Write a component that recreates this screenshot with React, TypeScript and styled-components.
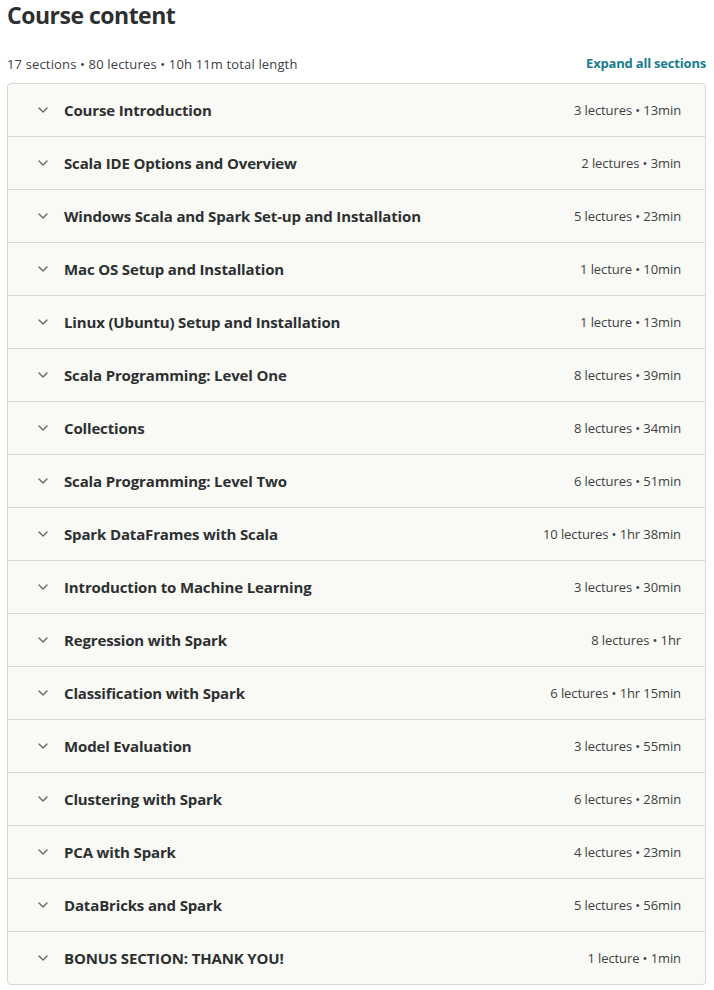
import React from "react";
import styled, { createGlobalStyle } from "styled-components";

const Global = createGlobalStyle`
  html, body { margin: 0; padding: 0; background: #ffffff; }
  body { font-family: "Open Sans", "Noto Sans", Arial, sans-serif; color: #2d2f31; }
`;

const Page = styled.div`
  padding: 0 8px 0 7px;
`;

const Title = styled.h2`
  margin: 0;
  font-size: 23px;
  line-height: 30px;
  font-weight: 700;
  color: #2d2f31;
  letter-spacing: -0.5px;
`;

const SummaryBar = styled.div`
  display: flex;
  align-items: center;
  justify-content: space-between;
  margin-top: 20px;
  height: 28px;
  margin-bottom: 5px;
`;

const Summary = styled.span`
  font-size: 13px;
  color: #3e4143;
  letter-spacing: 0.15px;
`;

const ExpandLink = styled.button`
  border: none;
  background: none;
  padding: 0;
  font-family: inherit;
  font-size: 13px;
  font-weight: 700;
  color: #1a7d8d;
  cursor: pointer;
  letter-spacing: -0.2px;
  margin-top: -3px;
`;

const Accordion = styled.div`
  border: 1px solid #d9d9cd;
  border-radius: 4px;
  overflow: hidden;
  background: #f9faf6;
`;

const Row = styled.div`
  display: flex;
  align-items: center;
  height: 52px;
  padding: 0 24px 0 29px;
  & + & { border-top: 1px solid #d9d9cd; }
`;

const Chevron = styled.span`
  display: flex;
  width: 12px;
  justify-content: center;
  color: #6a6f73;
  margin-right: 15px;
`;

const SectionTitle = styled.span`
  flex: 1;
  font-size: 15px;
  font-weight: 700;
  color: #2d2f31;
  letter-spacing: -0.15px;
`;

const Meta = styled.span`
  font-size: 13px;
  color: #3e4143;
  letter-spacing: -0.1px;
`;

const sections: [string, string][] = [
  ["Course Introduction", "3 lectures • 13min"],
  ["Scala IDE Options and Overview", "2 lectures • 3min"],
  ["Windows Scala and Spark Set-up and Installation", "5 lectures • 23min"],
  ["Mac OS Setup and Installation", "1 lecture • 10min"],
  ["Linux (Ubuntu) Setup and Installation", "1 lecture • 13min"],
  ["Scala Programming: Level One", "8 lectures • 39min"],
  ["Collections", "8 lectures • 34min"],
  ["Scala Programming: Level Two", "6 lectures • 51min"],
  ["Spark DataFrames with Scala", "10 lectures • 1hr 38min"],
  ["Introduction to Machine Learning", "3 lectures • 30min"],
  ["Regression with Spark", "8 lectures • 1hr"],
  ["Classification with Spark", "6 lectures • 1hr 15min"],
  ["Model Evaluation", "3 lectures • 55min"],
  ["Clustering with Spark", "6 lectures • 28min"],
  ["PCA with Spark", "4 lectures • 23min"],
  ["DataBricks and Spark", "5 lectures • 56min"],
  ["BONUS SECTION: THANK YOU!", "1 lecture • 1min"],
];

const ChevronIcon = () => (
  <svg width="10" height="6" viewBox="0 0 10 6" fill="none">
    <path d="M1 1l4 4 4-4" stroke="currentColor" strokeWidth="1.5" strokeLinecap="round" strokeLinejoin="round" />
  </svg>
);

export default function App() {
  return (
    <Page>
      <Global />
      <Title>Course content</Title>
      <SummaryBar>
        <Summary>17 sections • 80 lectures • 10h 11m total length</Summary>
        <ExpandLink>Expand all sections</ExpandLink>
      </SummaryBar>
      <Accordion>
        {sections.map(([t, m]) => (
          <Row key={t}>
            <Chevron><ChevronIcon /></Chevron>
            <SectionTitle>{t}</SectionTitle>
            <Meta>{m}</Meta>
          </Row>
        ))}
      </Accordion>
    </Page>
  );
}
